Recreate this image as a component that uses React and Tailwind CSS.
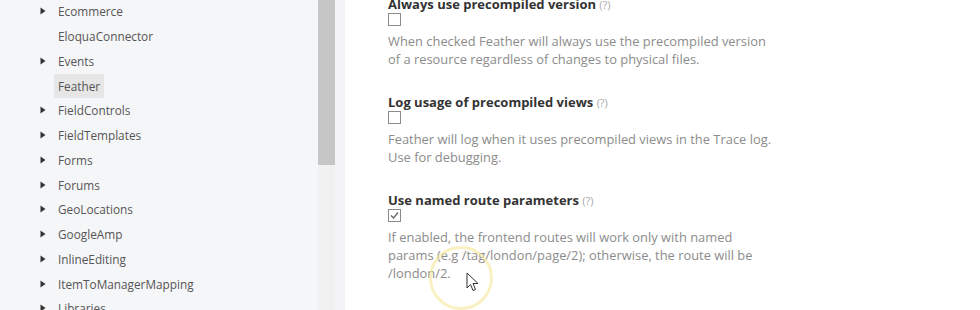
import React from "react";

const items = [
  { name: "Ecommerce", arrow: true },
  { name: "EloquaConnector", arrow: false },
  { name: "Events", arrow: true },
  { name: "Feather", arrow: false, active: true },
  { name: "FieldControls", arrow: true },
  { name: "FieldTemplates", arrow: true },
  { name: "Forms", arrow: true },
  { name: "Forums", arrow: true },
  { name: "GeoLocations", arrow: true },
  { name: "GoogleAmp", arrow: true },
  { name: "InlineEditing", arrow: true },
  { name: "ItemToManagerMapping", arrow: true },
  { name: "Libraries", arrow: true },
];

const sections = [
  {
    label: "Always use precompiled version",
    checked: false,
    desc: ["When checked Feather will always use the precompiled version", "of a resource regardless of changes to physical files."],
  },
  {
    label: "Log usage of precompiled views",
    checked: false,
    desc: ["Feather will log when it uses precompiled views in the Trace log.", "Use for debugging."],
  },
  {
    label: "Use named route parameters",
    checked: true,
    desc: [
      "If enabled, the frontend routes will work only with named",
      "params (e.g /tag/london/page/2); otherwise, the route will be",
      "/london/2.",
    ],
  },
  {
    label: "Use the default layout templates for all pages",
    checked: false,
    desc: [],
  },
];

function Checkbox({ checked }) {
  return (
    <div className="w-[13px] h-[13px] border border-[#8a8a8a] bg-white flex items-center justify-center">
      {checked && (
        <svg width="11" height="11" viewBox="0 0 11 11">
          <path d="M2 5.5 L4.5 8 L9 2.5" fill="none" stroke="#666" strokeWidth="1.3" />
        </svg>
      )}
    </div>
  );
}

export default function App() {
  return (
    <div
      className="w-[980px] h-[310px] overflow-hidden flex bg-white"
      style={{ fontFamily: '"Open Sans", "Noto Sans", sans-serif' }}
    >
      {/* sidebar */}
      <div className="w-[318px] h-full bg-[#f5f6f8]">
        <div className="flex flex-col mt-[-1px]">
          {items.map((it) => (
            <div key={it.name} className="h-[24.75px] flex items-center pl-[40px]">
              <div className="w-[14px] flex items-center">
                {it.arrow && (
                  <svg width="6" height="8" viewBox="0 0 6 8">
                    <path d="M0.5 0.5 L5.5 4 L0.5 7.5 Z" fill="#333" />
                  </svg>
                )}
              </div>
              <span
                className={
                  "text-[11.8px] leading-[24px] text-[#555] px-[4px] " +
                  (it.active ? "bg-[#e6e6e6]" : "")
                }
              >
                {it.name}
              </span>
            </div>
          ))}
        </div>
      </div>
      {/* scrollbar */}
      <div className="w-[17px] h-full bg-[#f1f1f1] flex flex-col">
        <div className="h-[165px] bg-[#c6c6c6]" />
      </div>
      <div className="w-[10px] h-full bg-[#f4f4f6]" />
      {/* content */}
      <div className="flex-1 relative pl-[43px]">
        <div className="flex flex-col gap-[26px] mt-[-4px]">
          {sections.map((s) => (
            <div key={s.label} className="flex flex-col">
              <div className="text-[13px] leading-[16px] font-bold text-[#333]">
                {s.label} <span className="font-normal text-[11px] text-[#aaa]">(?)</span>
              </div>
              <div className="mt-0">
                <Checkbox checked={s.checked} />
              </div>
              <div className="mt-[6px] text-[12.9px] leading-[18px] text-[#8c8c8c]">
                {s.desc.map((l) => (
                  <div key={l}>{l}</div>
                ))}
              </div>
            </div>
          ))}
        </div>
        {/* cursor highlight */}
        <div className="absolute left-[84px] top-[246px] w-[64px] h-[64px] rounded-full border-[3px] border-[#f6e89a] opacity-60" />
        <svg className="absolute left-[121px] top-[272px]" width="14" height="20" viewBox="0 0 14 20">
          <path d="M1 1 L1 16 L4.5 12.5 L7 18.5 L9.5 17.5 L7 11.5 L12 11.5 Z" fill="white" stroke="#333" strokeWidth="1" strokeLinejoin="round" />
        </svg>
      </div>
    </div>
  );
}
